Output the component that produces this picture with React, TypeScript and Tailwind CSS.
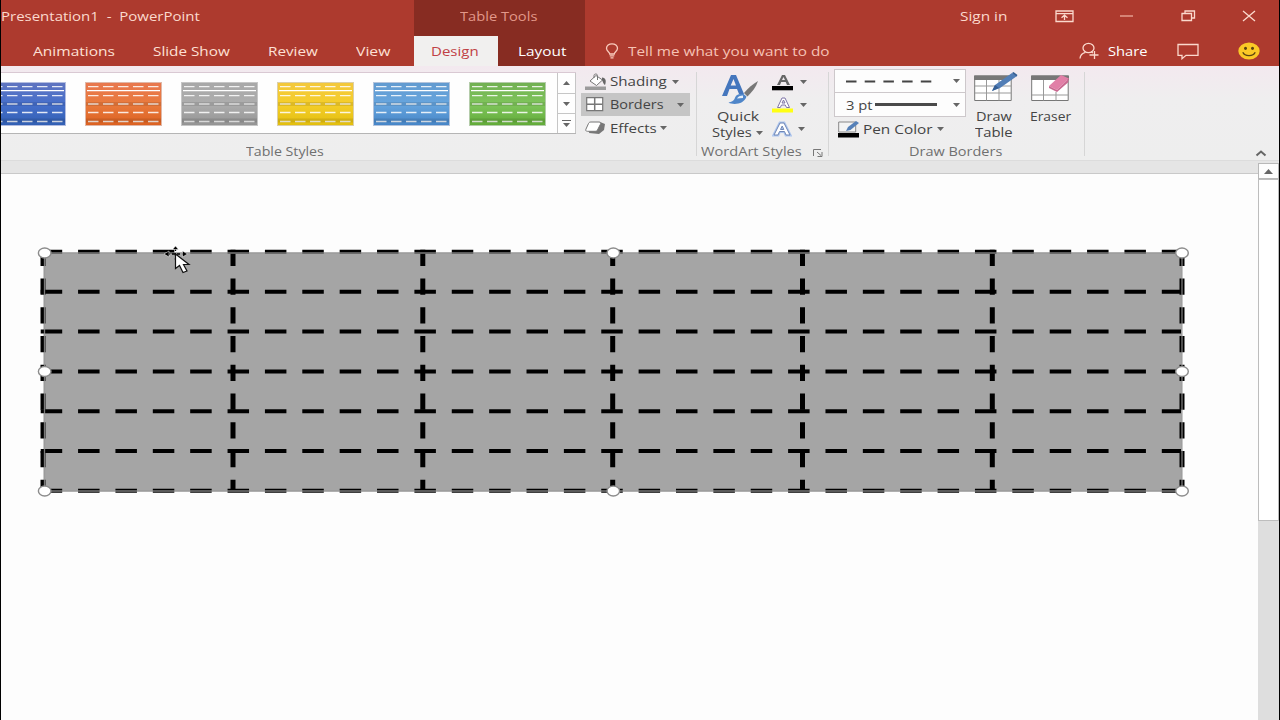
import { useLayoutEffect, useRef, useState } from "react";

const TABS = [
  { label: "Animations", width: 82, gap: "ml-8" },
  { label: "Slide Show", width: 77, gap: "ml-[38px]" },
  { label: "Review", width: 50, gap: "ml-[38px]" },
  { label: "View", width: 34, gap: "ml-[38px]" },
];

const STYLES = [
  { name: "blue", fill: "from-[#5f74c0] via-[#466fcb] to-[#3260b4]", border: "border-[#b3bde0]" },
  { name: "orange", fill: "from-[#e8784e] via-[#e97a3c] to-[#dc6120]", border: "border-[#e0b8a8]" },
  { name: "gray", fill: "from-[#a8a8a8] via-[#adadad] to-[#949494]", border: "border-[#c6c6c6]" },
  { name: "gold", fill: "from-[#f3c83c] via-[#f5ce28] to-[#e3bf0c]", border: "border-[#dccfa8]" },
  { name: "sky", fill: "from-[#629bd0] via-[#67a5de] to-[#4686c8]", border: "border-[#b4c4dc]" },
  { name: "green", fill: "from-[#71b052] via-[#7fc55b] to-[#62ab38]", border: "border-[#b4ccaa]" },
];

const ROWS = [291.7, 331.6, 371.5, 411.3, 451];
const COLS = [233, 422.8, 612.7, 802.5, 992.3];
const HANDLES = [
  [44.7, 253], [613.3, 253], [1182, 253],
  [44.7, 371.5], [1182, 371.5],
  [44.7, 491], [613.3, 491], [1182, 491],
];

// Stretches a caption horizontally to the given width
function Label({ text, width, className = "" }: { text: string; width: number; className?: string }) {
  const ref = useRef<HTMLSpanElement>(null);
  const [scale, setScale] = useState(1);

  useLayoutEffect(() => {
    if (ref.current) setScale(width / ref.current.offsetWidth);
  }, [width, text]);

  return (
    <span className={`block shrink-0 pt-0.5 whitespace-pre ${className}`} style={{ width }}>
      <span ref={ref} className="inline-block origin-left" style={{ transform: `scaleX(${scale})` }}>
        {text}
      </span>
    </span>
  );
}

function Arrow({ className = "" }: { className?: string }) {
  return (
    <svg className={`shrink-0 ${className}`} width="7" height="4" viewBox="0 0 7 4">
      <path d="M0 0h7L3.5 4z" fill="#666" />
    </svg>
  );
}

function Divider() {
  return <div className="mt-1.5 mb-1 w-px shrink-0 bg-[#d6d6d6]" />;
}

function TitleBar() {
  return (
    <div className="flex h-9 text-[12.5px] text-[#fbd9cd]">
      <div className="flex w-[413px] items-center pb-1">
        <Label text="Presentation1  -  PowerPoint" width={199} />
      </div>
      <div className="flex w-[171px] items-center bg-[#872c22] pb-1 pl-[46px] text-xs text-[#e3988a]">
        <Label text="Table Tools" width={77} />
      </div>
      <div className="flex flex-1 items-center pb-1 pl-[375px]">
        <Label text="Sign in" width={48} />
        <svg className="ml-[47px] shrink-0" width="19" height="13" viewBox="0 0 19 13" fill="none" stroke="#fbd9cd" strokeWidth="1.3">
          <path d="M1 1h17v10.5H1zM1 3.7h17M9.5 10V5.5M6.5 7.8l3-2.6 3 2.6" />
        </svg>
        <svg className="ml-[46px] shrink-0" width="14" height="12" viewBox="0 0 14 12">
          <path d="M0 6h13" stroke="#f2b5a6" strokeWidth="1.2" />
        </svg>
        <svg className="ml-[47px] shrink-0" width="15" height="12" viewBox="0 0 15 12" fill="none" stroke="#fbd9cd" strokeWidth="1.3">
          <path d="M1 3.5h9.5v7H1zM4 3.5V1h9.5v7h-3" />
        </svg>
        <svg className="ml-[46px] shrink-0" width="14" height="12" viewBox="0 0 14 12">
          <path d="M1 1l12 10M13 1L1 11" stroke="#fbd9cd" strokeWidth="1.3" />
        </svg>
      </div>
    </div>
  );
}

function TabBar() {
  return (
    <div className="flex h-[30px] text-[12.5px] text-[#fde0d5]">
      <div className="flex w-[413px] items-center">
        {TABS.map((tab) => (
          <Label key={tab.label} text={tab.label} width={tab.width} className={tab.gap} />
        ))}
      </div>
      <div className="flex w-[84px] items-center bg-[#f1f0ef] pl-[17px] text-[#c04145]">
        <Label text="Design" width={48} />
      </div>
      <div className="flex w-[87px] items-center bg-[#872c22] pl-5 text-white">
        <Label text="Layout" width={48} />
      </div>
      <div className="flex flex-1 items-center pl-5">
        <svg className="shrink-0" width="14" height="16" viewBox="0 0 14 16" fill="none" stroke="#f9cbbd" strokeWidth="1.3">
          <path d="M4.7 11c0-2-3.2-2.8-3.2-5.7a5.5 4.5 0 0 1 11 0C12.5 8.2 9.3 9 9.3 11zM4.7 12.8h4.6M5.5 14.8h3" />
        </svg>
        <Label text="Tell me what you want to do" width={201} className="ml-[9px] text-[#f6c3b5]" />
        <svg className="ml-[250px] shrink-0" width="20" height="18" viewBox="0 0 20 18" fill="none" stroke="#fbd9cd" strokeWidth="1.3">
          <ellipse cx="9.5" cy="6" rx="5.5" ry="4.7" />
          <path d="M1 16.5c.3-3.5 2.5-5.5 5.5-6.2M12 9.8l2 1.2M10.500 13h9M15.500 9v8" />
        </svg>
        <Label text="Share" width={40} className="ml-[9px] text-white" />
        <svg className="ml-[29px] shrink-0" width="22" height="17" viewBox="0 0 22 17" fill="none" stroke="#fbd9cd" strokeWidth="1.3">
          <path d="M1 1.5h20v10.8H9l-4 3.4v-3.4H1z" />
        </svg>
        <svg className="ml-[39px] shrink-0" width="22" height="18" viewBox="0 0 22 18">
          <ellipse cx="11" cy="9" rx="10.7" ry="8.6" fill="#fbc926" />
          <ellipse cx="7.5" cy="6.3" rx="1.5" ry="1.6" fill="#5b4310" />
          <ellipse cx="14.5" cy="6.3" rx="1.5" ry="1.6" fill="#5b4310" />
          <path d="M4.8 10.3c2 4.5 10.4 4.5 12.4 0" fill="none" stroke="#5b4310" strokeWidth="1.3" />
        </svg>
      </div>
    </div>
  );
}

function StyleThumb({ fill, border }: { fill: string; border: string }) {
  return (
    <div className={`h-11 w-[77px] shrink-0 border bg-linear-to-b ${fill} ${border}`}>
      <svg width="75" height="42" viewBox="0 0 75 42" stroke="#fff">
        <path d="M1 7.7h73" strokeWidth="1.3" />
        <g strokeWidth="1.3" strokeDasharray="10.5 4.5" opacity=".85">
          <path d="M2 3.7h72M2 12.7h72M2 21h72M2 29.5h72M2 38.5h72" />
        </g>
        <g stroke="#000" opacity=".09" strokeWidth="4">
          <path d="M0 21h75M0 37.5h75" />
        </g>
      </svg>
    </div>
  );
}

function TableStylesGroup() {
  return (
    <div className="flex w-[695px] flex-col">
      <div className="flex h-[77px] shrink-0">
        <div className="mt-1.5 flex h-[62px] w-[575px] border-y border-t-[#d9c9d3] border-b-[#b5b5b5] bg-[#fefefe]">
          <div className="flex flex-1 items-center gap-[19px] overflow-hidden pt-px">
            {STYLES.map((style) => (
              <div key={style.name} className="shrink-0 first:-ml-[12.5px]">
                <StyleThumb fill={style.fill} border={style.border} />
              </div>
            ))}
          </div>
          <div className="flex w-[19px] flex-col divide-y divide-[#c6c6c6] border-x border-[#c6c6c6]">
            <div className="flex h-[21px] items-center justify-center">
              <Arrow className="rotate-180" />
            </div>
            <div className="flex h-5 items-center justify-center">
              <Arrow />
            </div>
            <div className="flex flex-1 flex-col items-center justify-center gap-0.5">
              <div className="h-px w-[9px] bg-[#666]" />
              <Arrow />
            </div>
          </div>
        </div>
        <div className="ml-[5px] mt-1 flex w-[109px] flex-col">
          <div className="flex h-[23px] shrink-0 items-center">
            <svg className="ml-1 shrink-0" width="22" height="18" viewBox="0 0 22 18">
              <path d="M5 8l6-5.5 6.5 4.5-6 5.5z" fill="#fff" stroke="#777" />
              <path d="M9 5V2.5c0-2 3.5-2 3.5 0V7" fill="none" stroke="#777" />
              <path d="M17 4.5c4 0 4.5 4 3 7.5-1.5-.5-2-3-3-5z" fill="#666" />
              <path d="M0 13.5h21V17H0z" fill="#9b9b9b" />
            </svg>
            <Label text="Shading" width={57} className="ml-[3px]" />
            <Arrow className="ml-[5px]" />
          </div>
          <div className="flex h-[23px] shrink-0 items-center bg-[#c5c5c5]">
            <svg className="ml-[5px] shrink-0" width="18" height="15" viewBox="0 0 18 15">
              <path d="M.7.7h16v13H.7z" fill="#fff" stroke="#777" strokeWidth="1.2" />
              <path d="M8.7 1v12M1 7.2h15.5" stroke="#777" strokeWidth="1.5" />
            </svg>
            <Label text="Borders" width={53} className="ml-1.5" />
            <Arrow className="ml-3.5" />
          </div>
          <div className="flex h-6 shrink-0 items-center">
            <svg className="ml-1 shrink-0" width="21" height="14" viewBox="0 0 21 14">
              <path d="M6 1h9l5 2-1 6-5 4-10-1z" fill="#777" />
              <path d="M6 1h8c2 0 2 1 1.3 2.5L12.5 9c-.5 1-1 1.300-2.500 1.300H2.500C.5 10.300.5 9 1 8l2.500-5.500C4 1.500 4.500 1 6 1z" fill="#fff" stroke="#777" />
            </svg>
            <Label text="Effects" width={47} className="ml-1" />
            <Arrow className="ml-[3px]" />
          </div>
        </div>
      </div>
      <div className="flex h-4 pl-[245px] text-xs leading-[14px] text-[#707070]">
        <Label text="Table Styles" width={78} />
      </div>
    </div>
  );
}

function WordArtGroup() {
  return (
    <div className="flex w-[131px] flex-col">
      <div className="flex h-[77px] shrink-0">
        <div className="flex w-[70px] flex-col pl-[15px]">
          <svg className="ml-2.5 mt-[7px] shrink-0" width="38" height="33" viewBox="0 0 38 33">
            <path d="M0 23L9 2h5l8 19h-5l-2-5H7.5L5 23zM8.7 12.5H14L11.5 6z" fill="#4576bd" fillRule="evenodd" />
            <path d="M36 8c-5 3-10 7-14 12l3.5 3.5C30 19 34 14.5 36 8z" fill="#777" />
            <path d="M21.5 21c-6-.5-8 1.5-9 5-1 2-3 3-6 3.5 5 3 16 1.5 18-6z" fill="#4f86c9" />
            <path d="M21 22.5c-3 0-5 1-6 3l6-.5z" fill="#e6effa" />
          </svg>
          <Label text="Quick" width={42} className="mt-px ml-[5px] h-4 leading-4" />
          <div className="flex h-4 items-start">
            <Label text="Styles" width={40} className="leading-4" />
            <Arrow className="mt-2 ml-1" />
          </div>
        </div>
        <div className="ml-[5px] flex flex-col pt-2">
          <div className="flex h-[23px] items-start">
            <svg className="shrink-0" width="22" height="17" viewBox="0 0 22 17">
              <path d="M5 11l5-10h3l5 10h-3l-1.3-3H9.2L8 11zM10 6h3l-1.5-3z" fill="#666" fillRule="evenodd" />
              <path d="M0 12h21v4.3H0z" fill="#000" />
            </svg>
            <Arrow className="ml-1.5 mt-1.5" />
          </div>
          <div className="flex h-6 items-start">
            <svg className="shrink-0" width="22" height="17" viewBox="0 0 22 17">
              <path d="M0 11.5h21v4H0z" fill="#ffff14" />
              <path d="M5.5 10.5L10 1h3l4.5 9.5h-3L13.3 8H9.5l-1.2 2.5zM10 6h3l-1.5-3z" fill="#fff" stroke="#7f75a8" />
            </svg>
            <Arrow className="ml-1.5 mt-1.5" />
          </div>
          <div className="flex items-start">
            <svg className="shrink-0" width="20" height="17" viewBox="0 0 20 17">
              <path d="M2 14L8 2h4l6 12h-4l-1.5-3.5h-5L6 14zM8.5 8.5h3.3L10.2 5z" fill="#fff" stroke="#aec6ee" strokeWidth="3" />
              <path d="M2 14L8 2h4l6 12h-4l-1.5-3.5h-5L6 14zM8.5 8.5h3.3L10.2 5z" fill="#fff" stroke="#6f86b5" />
            </svg>
            <Arrow className="ml-1.5 mt-1.5" />
          </div>
        </div>
      </div>
      <div className="flex h-4 pl-1 text-xs leading-[14px] text-[#707070]">
        <Label text="WordArt Styles" width={101} />
        <svg className="ml-[11px] mt-1.5 shrink-0" width="10" height="8" viewBox="0 0 10 8" fill="none" stroke="#777">
          <path d="M.5 7V.5H8M4 3l4 3.5M9 3v4.5H4.5" />
        </svg>
      </div>
    </div>
  );
}

function DrawBordersGroup() {
  return (
    <div className="flex w-[255px] flex-col">
      <div className="flex h-[77px] shrink-0">
        <div className="ml-[5px] mt-[3px] w-[132px]">
          <div className="border border-[#cdc8cb] bg-[#fdfdfd]">
            <div className="flex h-[23px] items-center border-b border-[#cdc8cb] pl-2.5">
              <svg width="88" height="3" viewBox="0 0 88 3">
                <path d="M1 1.5h87" stroke="#444" strokeWidth="2" strokeDasharray="10.5 8.2" />
              </svg>
              <Arrow className="ml-5" />
            </div>
            <div className="flex h-[23px] items-center pl-[11px] text-xs">
              <Label text="3 pt" width={27} className="pt-0" />
              <div className="ml-0.5 h-[3px] w-[62px] bg-[#4a4a4a]" />
              <Arrow className="ml-4" />
            </div>
          </div>
          <div className="flex h-6 items-center pl-1">
            <svg className="shrink-0" width="22" height="17" viewBox="0 0 22 17">
              <path d="M.7 11V1h17v10z" fill="#f4f4f4" stroke="#888" />
              <path d="M8 10l2-4 8-6 3 2-8.5 7z" fill="#5580b8" />
              <path d="M0 12h21v4.5H0z" fill="#000" />
            </svg>
            <Label text="Pen Color" width={70} className="ml-[3px]" />
            <Arrow className="ml-1" />
          </div>
        </div>
        <div className="ml-1 flex w-[50px] flex-col pt-1.5">
          <svg className="ml-1 shrink-0" width="44" height="31" viewBox="0 0 44 31">
            <path d="M.7 4h36.5v24.5H.7z" fill="#fff" stroke="#777" />
            <path d="M0 3.5h38V8H0z" fill="#777" />
            <path d="M1 14h36M1 21h36M12.5 8v20.5M25 8v20.5" stroke="#999" />
            <path d="M18 19l3-6L38 1l5 3-17 12z" fill="#527eb6" />
            <path d="M18 19l3-6 4 3zM38 1l1.500-1 4 3-1 1.500z" fill="#355f94" />
          </svg>
          <Label text="Draw" width={36} className="ml-1.5 mt-1 h-4 leading-4" />
          <Label text="Table" width={38} className="ml-[5px] h-4 leading-4" />
        </div>
        <div className="ml-2 flex flex-col pt-1.5">
          <svg className="ml-[3px] shrink-0" width="40" height="31" viewBox="0 0 40 31">
            <path d="M.7 4h36.5v24.5H.7z" fill="#fff" stroke="#777" />
            <path d="M0 3.5h38V8H0z" fill="#777" />
            <path d="M1 23h36M12.5 8v20.5M25 20v8.5" stroke="#999" />
            <path d="M18 14L30 3l8 3.5L26 18z" fill="#e17fa7" />
            <path d="M18 14l8 4 12-11.500-1 4L26 20l-8-4z" fill="#c96890" />
          </svg>
          <Label text="Eraser" width={41} className="ml-0.5 mt-1 h-4 leading-4" />
        </div>
      </div>
      <div className="flex h-4 pl-20 text-xs leading-[14px] text-[#707070]">
        <Label text="Draw Borders" width={93} />
      </div>
    </div>
  );
}

function Ribbon() {
  return (
    <div className="flex h-[95px] border-b border-[#dcdcdc] bg-linear-to-b from-[#f3e9ef] via-[#efeeef] via-35% to-[#eeeeee] text-[12.5px] text-[#444]">
      <TableStylesGroup />
      <Divider />
      <WordArtGroup />
      <Divider />
      <DrawBordersGroup />
      <Divider />
      <div className="flex flex-1 items-end justify-end pb-[3px] pr-3">
        <svg width="12" height="8" viewBox="0 0 12 8">
          <path d="M1.5 6.5L6 2.5l4.5 4" fill="none" stroke="#666" strokeWidth="2" />
        </svg>
      </div>
    </div>
  );
}

function SlideTable() {
  return (
    <svg className="block" width="1257" height="546" viewBox="1 174 1257 546">
      <path d="M43.5 252.5H1182v239H43.5z" fill="#a5a5a5" />
      <g stroke="#000" strokeWidth="4" strokeDasharray="21.5 15.87">
        <path d="M40.7 251.7H1181" />
        {ROWS.map((y) => (
          <path key={y} d={`M40.7 ${y}H1181`} />
        ))}
        <path d="M40.7 490.7H1181" />
      </g>
      <g stroke="#000" strokeWidth="5" strokeDasharray="16.3 12.45">
        <path d="M43 249.7V491" />
        {COLS.map((x) => (
          <path key={x} d={`M${x} 249.7V491`} />
        ))}
        <path d="M1182 249.7V491" />
      </g>
      <path d="M44.5 253H1182v238H44.5z" fill="none" stroke="#999" strokeWidth="1.3" opacity=".8" />
      {HANDLES.map(([x, y]) => (
        <ellipse key={`${x}-${y}`} cx={x} cy={y} rx="6.3" ry="5" fill="#fff" stroke="#8c8c8c" strokeWidth="1.4" />
      ))}
      {/* move cursor */}
      <g>
        <path d="M167 254h17M175.5 248v12" stroke="#000" strokeWidth="1.3" strokeDasharray="3 2" />
        <path d="M172.5 249.5l3-3.5 3 3.5zM169 251l-5 3 5 3zM182.5 251l5 3-5 3z" fill="#000" stroke="#fff" strokeWidth=".5" />
        <path d="M175.5 254v14.5l4-3 3.5 7 4-1.5-3.5-6.5h5.5z" fill="#fff" stroke="#111" strokeWidth="1.2" />
      </g>
    </svg>
  );
}

function ScrollBar() {
  return (
    <div className="flex w-[21px] flex-col bg-[#dedede]">
      <div className="flex h-4 shrink-0 items-center justify-center border border-[#b8b8b8] bg-[#fdfdfd]">
        <svg width="9" height="5" viewBox="0 0 9 5">
          <path d="M0 5h9L4.5 0z" fill="#666" />
        </svg>
      </div>
      <div className="h-[342px] shrink-0 border border-[#bdbdbd] bg-white" />
    </div>
  );
}

export default function App() {
  return (
    <div className="flex h-[720px] w-[1280px] flex-col overflow-hidden border-x border-black bg-[#ad3a2e] font-['Open_Sans','Noto_Sans',sans-serif] font-medium">
      <TitleBar />
      <TabBar />
      <Ribbon />
      <div className="flex flex-1 bg-[#e5e5e5]">
        <div className="flex w-[1257px] flex-col pt-3">
          <div className="flex-1 border-t border-[#c9c9c9] bg-[#fdfdfd]">
            <SlideTable />
          </div>
        </div>
        <div className="flex flex-1 pt-0.5">
          <ScrollBar />
        </div>
      </div>
    </div>
  );
}
